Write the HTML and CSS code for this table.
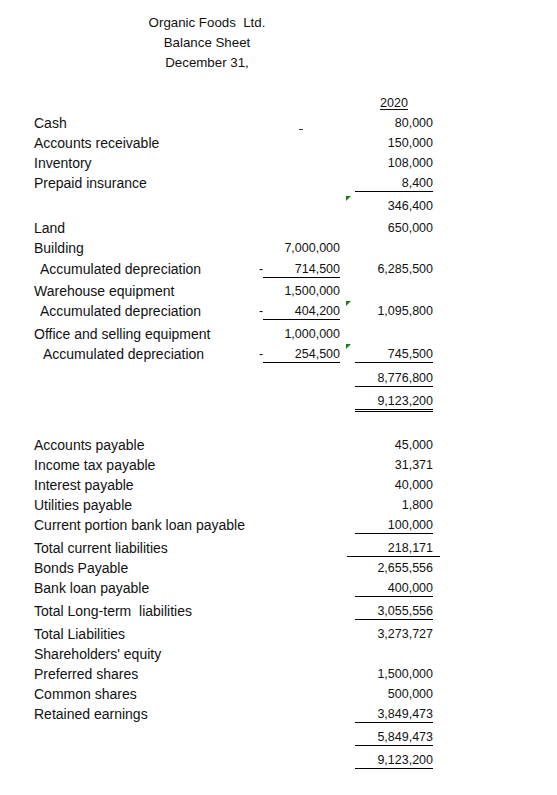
FILE: index.html
```html
<!DOCTYPE html>
<html lang="en">
<head>
<meta charset="utf-8">
<title>Organic Foods Ltd. Balance Sheet</title>
<link rel="stylesheet" href="styles.css">
</head>
<body>
<div class="sheet">
  <header class="title">
    <div>Organic Foods&nbsp; Ltd.</div>
    <div>Balance Sheet</div>
    <div>December 31,</div>
  </header>

  <section class="block">
    <div class="row"><span class="lbl"></span><span class="dash"></span><span class="c1"></span><span class="c2"><span class="num year"><u>2020</u></span></span></div>
    <div class="row"><span class="lbl">Cash</span><span class="dash"></span><span class="c1"><i class="tick"></i></span><span class="c2"><span class="num">80,000</span></span></div>
    <div class="row"><span class="lbl">Accounts receivable</span><span class="dash"></span><span class="c1"></span><span class="c2"><span class="num">150,000</span></span></div>
    <div class="row"><span class="lbl">Inventory</span><span class="dash"></span><span class="c1"></span><span class="c2"><span class="num">108,000</span></span></div>
    <div class="row r23"><span class="lbl">Prepaid insurance</span><span class="dash"></span><span class="c1"></span><span class="c2"><span class="num ul">8,400</span></span></div>
    <div class="row r22"><span class="lbl"></span><span class="dash"></span><span class="c1"></span><span class="c2 err"><span class="num">346,400</span></span></div>
    <div class="row"><span class="lbl">Land</span><span class="dash"></span><span class="c1"></span><span class="c2"><span class="num">650,000</span></span></div>
    <div class="row r21"><span class="lbl">Building</span><span class="dash"></span><span class="c1"><span class="num">7,000,000</span></span><span class="c2"></span></div>
    <div class="row r22"><span class="lbl ind1">Accumulated depreciation</span><span class="dash">-</span><span class="c1"><span class="num ul">714,500</span></span><span class="c2"><span class="num">6,285,500</span></span></div>
    <div class="row"><span class="lbl">Warehouse equipment</span><span class="dash"></span><span class="c1"><span class="num">1,500,000</span></span><span class="c2"></span></div>
    <div class="row r23"><span class="lbl ind1">Accumulated depreciation</span><span class="dash">-</span><span class="c1"><span class="num ul">404,200</span></span><span class="c2 err"><span class="num">1,095,800</span></span></div>
    <div class="row"><span class="lbl">Office and selling equipment</span><span class="dash"></span><span class="c1"><span class="num">1,000,000</span></span><span class="c2"></span></div>
    <div class="row r24"><span class="lbl ind2">Accumulated depreciation</span><span class="dash">-</span><span class="c1"><span class="num ul">254,500</span></span><span class="c2 err"><span class="num ul">745,500</span></span></div>
    <div class="row r23"><span class="lbl"></span><span class="dash"></span><span class="c1"></span><span class="c2"><span class="num ul">8,776,800</span></span></div>
    <div class="row r44"><span class="lbl"></span><span class="dash"></span><span class="c1"></span><span class="c2"><span class="num dbl">9,123,200</span></span></div>

    <div class="row"><span class="lbl">Accounts payable</span><span class="dash"></span><span class="c1"></span><span class="c2"><span class="num">45,000</span></span></div>
    <div class="row"><span class="lbl">Income tax payable</span><span class="dash"></span><span class="c1"></span><span class="c2"><span class="num">31,371</span></span></div>
    <div class="row"><span class="lbl">Interest payable</span><span class="dash"></span><span class="c1"></span><span class="c2"><span class="num">40,000</span></span></div>
    <div class="row"><span class="lbl">Utilities payable</span><span class="dash"></span><span class="c1"></span><span class="c2"><span class="num">1,800</span></span></div>
    <div class="row r23"><span class="lbl">Current portion bank loan payable</span><span class="dash"></span><span class="c1"></span><span class="c2"><span class="num ul">100,000</span></span></div>
    <div class="row"><span class="lbl">Total current liabilities</span><span class="dash"></span><span class="c1"></span><span class="c2 wide"><span class="num ul">218,171</span></span></div>
    <div class="row"><span class="lbl">Bonds Payable</span><span class="dash"></span><span class="c1"></span><span class="c2"><span class="num">2,655,556</span></span></div>
    <div class="row r23"><span class="lbl">Bank loan payable</span><span class="dash"></span><span class="c1"></span><span class="c2"><span class="num ul">400,000</span></span></div>
    <div class="row r23"><span class="lbl">Total Long-term&nbsp; liabilities</span><span class="dash"></span><span class="c1"></span><span class="c2"><span class="num ul">3,055,556</span></span></div>
    <div class="row"><span class="lbl">Total Liabilities</span><span class="dash"></span><span class="c1"></span><span class="c2"><span class="num">3,273,727</span></span></div>
    <div class="row"><span class="lbl">Shareholders' equity</span><span class="dash"></span><span class="c1"></span><span class="c2"></span></div>
    <div class="row"><span class="lbl">Preferred shares</span><span class="dash"></span><span class="c1"></span><span class="c2"><span class="num">1,500,000</span></span></div>
    <div class="row"><span class="lbl">Common shares</span><span class="dash"></span><span class="c1"></span><span class="c2"><span class="num">500,000</span></span></div>
    <div class="row r23"><span class="lbl">Retained earnings</span><span class="dash"></span><span class="c1"></span><span class="c2"><span class="num ul">3,849,473</span></span></div>
    <div class="row r23"><span class="lbl"></span><span class="dash"></span><span class="c1"></span><span class="c2"><span class="num ul">5,849,473</span></span></div>
    <div class="row"><span class="lbl"></span><span class="dash"></span><span class="c1"></span><span class="c2"><span class="num dbl">9,123,200</span></span></div>
  </section>
</div>
</body>
</html>
```

FILE: styles.css
```css
* { box-sizing: border-box; }

html, body {
  margin: 0;
  padding: 0;
  background: #ffffff;
}

body {
  font-family: "Liberation Sans", Arial, sans-serif;
  font-size: 14px;
  color: #111111;
}

.sheet {
  padding: 13px 0 0 34px;
}

.title {
  width: 346px;
  text-align: center;
  line-height: 20px;
  font-size: 13.3px;
}

.block {
  margin-top: 20px;
}

.row {
  display: grid;
  grid-template-columns: 224px 5px 77px 101px;
  height: 20px;
  align-items: start;
}

.r21 { height: 21px; }
.r22 { height: 22px; }
.r23 { height: 23px; }
.r24 { height: 24px; }
.r44 { height: 44px; }

.lbl {
  display: block;
  line-height: 21px;
  white-space: nowrap;
}

.ind1 { padding-left: 6px; }
.ind2 { padding-left: 9px; }

.dash {
  display: block;
  line-height: 21px;
  font-size: 12.4px;
  margin-left: 1px;
}

.c1 {
  display: block;
}

.c2 {
  display: block;
  position: relative;
  padding: 0 8px 0 15px;
}

.c2.wide {
  padding: 0 1px 0 7px;
}

.c2.wide .num {
  padding-right: 7px;
}

.num {
  display: block;
  height: 18px;
  line-height: 21px;
  font-size: 12.5px;
  text-align: right;
  white-space: nowrap;
}

.num.year {
  text-align: center;
}

.num.year u {
  text-underline-offset: 2px;
}

.ul {
  height: 19px;
  border-bottom: 1px solid #000;
}

.dbl {
  height: 21px;
  border-bottom: 3px double #000;
}

.err::before {
  content: "";
  position: absolute;
  left: 6px;
  top: 0;
  width: 0;
  height: 0;
  border-style: solid;
  border-width: 5px 5px 0 0;
  border-color: #1f7a1f transparent transparent transparent;
}

.tick {
  display: block;
  width: 4px;
  height: 1px;
  margin: 16px 0 0 36px;
  background: #333;
}
```
